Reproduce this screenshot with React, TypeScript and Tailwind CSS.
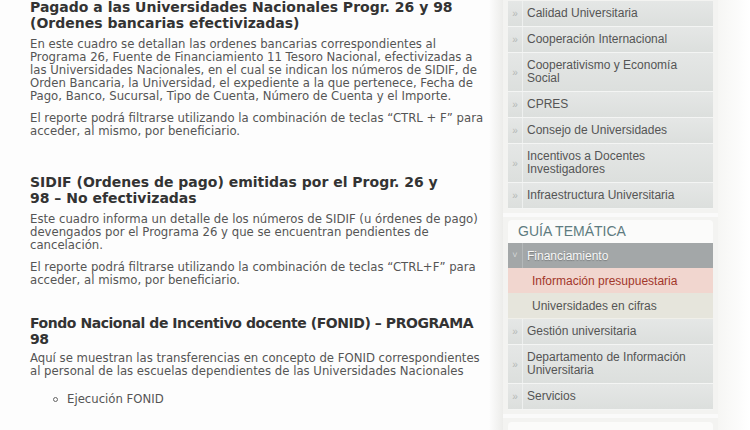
import { ReactNode } from 'react';

const body = "font-['DejaVu_Sans',Verdana,sans-serif]";

function Heading({ children, className = '' }: { children: ReactNode; className?: string }) {
  return (
    <h2 className={`whitespace-nowrap text-[14px] leading-[16px] font-bold text-[#333] ${className}`}>
      {children}
    </h2>
  );
}

function Para({ children, className = '' }: { children: ReactNode; className?: string }) {
  return (
    <p className={`whitespace-nowrap text-[11.7px] leading-[13px] text-[#555] ${className}`}>
      {children}
    </p>
  );
}

type Item = { label: string; two?: boolean };

const topItems: Item[] = [
  { label: 'Calidad Universitaria' },
  { label: 'Cooperación Internacional' },
  { label: 'Cooperativismo y Economía Social', two: true },
  { label: 'CPRES' },
  { label: 'Consejo de Universidades' },
  { label: 'Incentivos a Docentes Investigadores', two: true },
  { label: 'Infraestructura Universitaria' },
];

const bottomItems: Item[] = [
  { label: 'Gestión universitaria' },
  { label: 'Departamento de Información Universitaria', two: true },
  { label: 'Servicios' },
];

function MenuRow({ item }: { item: Item }) {
  return (
    <div
      className={`flex items-stretch border-b border-[#f4f5f4] bg-gradient-to-b from-[#e5e7e6] to-[#dcdfdd] ${
        item.two ? 'h-[39px]' : 'h-[26px]'
      }`}
    >
      <div className="flex w-[15px] items-center justify-center border-r border-[#eef0ef] text-[10px] text-[#b4b8b6]">
        »
      </div>
      <div className="flex flex-1 items-center pl-[4px] pr-2 text-[12px] leading-[13px] text-[#555]">
        {item.label}
      </div>
    </div>
  );
}

export default function App() {
  return (
    <div className="flex h-[430px] w-[750px] overflow-hidden bg-white">
      {/* main content */}
      <div className={`relative w-[503px] bg-[#fdfdfd] pl-[30px] pr-[10px] ${body}`}>
        <div className="absolute right-0 top-0 h-full w-[14px] bg-gradient-to-r from-transparent to-[#ececea]" />
        <Heading className="-mt-[1px] mb-[-1px]">
          Pagado a las Universidades Nacionales Progr. 26 y 98
          <br />
          (Ordenes bancarias efectivizadas)
        </Heading>
        <Para className="mt-[8px]">
          En este cuadro se detallan las ordenes bancarias correspondientes al
          <br />
          Programa 26, Fuente de Financiamiento 11 Tesoro Nacional, efectivizadas a
          <br />
          las Universidades Nacionales, en el cual se indican los números de SIDIF, de
          <br />
          Orden Bancaria, la Universidad, el expediente a la que pertenece, Fecha de
          <br />
          Pago, Banco, Sucursal, Tipo de Cuenta, Número de Cuenta y el Importe.
        </Para>
        <Para className="mt-[9px]">
          El reporte podrá filtrarse utilizando la combinación de teclas “CTRL + F” para
          <br />
          acceder, al mismo, por beneficiario.
        </Para>

        <Heading className="mt-[36px]">
          SIDIF (Ordenes de pago) emitidas por el Progr. 26 y
          <br />
          98 – No efectivizadas
        </Heading>
        <Para className="mt-[7px]">
          Este cuadro informa un detalle de los números de SIDIF (u órdenes de pago)
          <br />
          devengados por el Programa 26 y que se encuentran pendientes de
          <br />
          cancelación.
        </Para>
        <Para className="mt-[9px]">
          El reporte podrá filtrarse utilizando la combinación de teclas “CTRL+F” para
          <br />
          acceder, al mismo, por beneficiario.
        </Para>

        <Heading className="mt-[28px] tracking-[-0.45px]">
          Fondo Nacional de Incentivo docente (FONID) – PROGRAMA
          <br />
          98
        </Heading>
        <Para className="mt-[5px]">
          Aquí se muestran las transferencias en concepto de FONID correspondientes
          <br />
          al personal de las escuelas dependientes de las Universidades Nacionales
        </Para>
        <ul className="mt-[15px] pl-[23px] text-[11.7px] leading-[13px] text-[#555]">
          <li className="flex items-center gap-[9px]">
            <span className="h-[5px] w-[5px] rounded-full border border-[#666]" />
            Ejecución FONID
          </li>
        </ul>
      </div>

      {/* sidebar */}
      <div className="w-[215px] bg-[#f3f3f1] font-['Liberation_Sans',Arial,sans-serif]">
        <div className="px-[5px] pt-[1px]">
          {topItems.map((it) => (
            <MenuRow key={it.label} item={it} />
          ))}
        </div>
        <div className="mt-[4px] h-[4px] bg-[#fafafa]" />
        <div className="mt-[3px] px-[5px]">
          <div className="flex h-[23px] items-center rounded-t-[4px] bg-[#fbfbfa] pl-[10px] text-[14px] text-[#5e7b80]">
            GUÍA TEMÁTICA
          </div>
          <div className="flex h-[25px] items-stretch bg-[#a3a7a8]">
            <div className="flex w-[15px] items-center justify-center border-r border-[#b4b8b9] text-[9px] text-[#d4d7d8]">
              ˅
            </div>
            <div className="flex items-center pl-[4px] text-[12px] text-[#f7f7f7] [text-shadow:0_1px_1px_rgba(0,0,0,0.25)]">
              Financiamiento
            </div>
          </div>
          <div className="flex h-[25px] items-center bg-[#f1d6cf] pl-[24px] text-[12px] text-[#a2372b]">
            Información presupuestaria
          </div>
          <div className="flex h-[26px] items-center border-b border-[#f0efe9] bg-[#e6e5dc] pl-[24px] text-[12px] text-[#555]">
            Universidades en cifras
          </div>
          {bottomItems.map((it) => (
            <MenuRow key={it.label} item={it} />
          ))}
        </div>
        <div className="mt-[4px] h-[4px] bg-[#fafafa]" />
        <div className="mx-[5px] mt-[4px] h-[20px] rounded-t-[4px] bg-[#fbfbfa]" />
      </div>

      <div className="flex-1 bg-gradient-to-r from-[#f6f6f4] to-white" />
    </div>
  );
}
